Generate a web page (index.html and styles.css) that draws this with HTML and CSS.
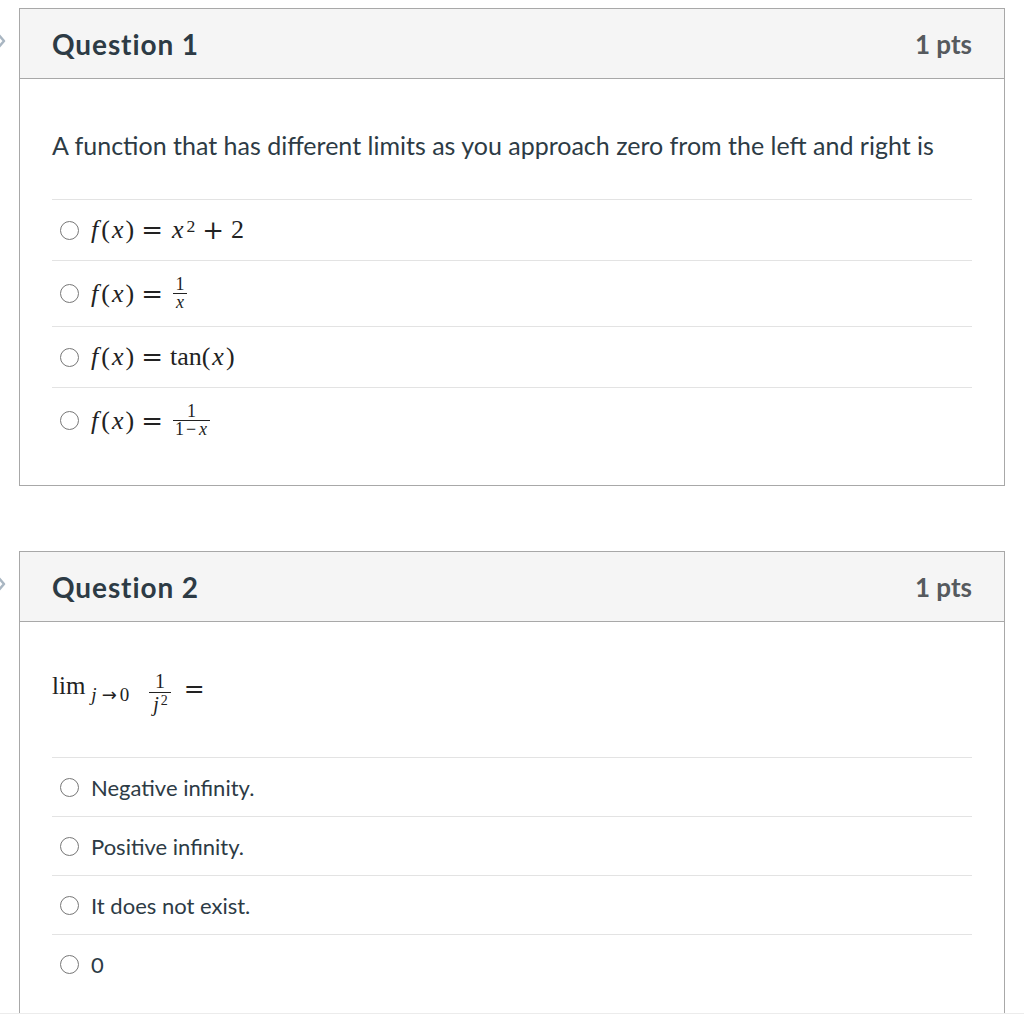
FILE: index.html
```html
<!DOCTYPE html>
<html lang="en">
<head>
<meta charset="utf-8">
<title>Quiz</title>
<link rel="stylesheet" href="styles.css">
</head>
<body>
<div class="page">
  <section class="card">
    <svg class="chevron" width="10" height="18" viewBox="0 0 10 18"><path d="M1 1 L8 9 L1 17" fill="none" stroke="#a9b6c2" stroke-width="2.5" stroke-linecap="round" stroke-linejoin="round"/></svg>
    <header class="card-header">
      <h2 class="q-title">Question 1</h2>
      <span class="q-pts">1 pts</span>
    </header>
    <div class="card-body">
      <p class="q-text">A function that has different limits as you approach zero from the left and right is</p>
      <ul class="answers">
        <li class="answer"><span class="radio"></span><span class="math"><i class="mi-f">f</i>(<i>x</i>)<span class="rel">=</span><i>x</i><sup>2</sup><span class="bin">+</span>2</span></li>
        <li class="answer"><span class="radio"></span><span class="math"><i class="mi-f">f</i>(<i>x</i>)<span class="rel">=</span><span class="frac"><span class="num">1</span><span class="den"><i>x</i></span></span></span></li>
        <li class="answer"><span class="radio"></span><span class="math"><i class="mi-f">f</i>(<i>x</i>)<span class="rel">=</span>tan(<i>x</i>)</span></li>
        <li class="answer"><span class="radio"></span><span class="math"><i class="mi-f">f</i>(<i>x</i>)<span class="rel">=</span><span class="frac"><span class="num">1</span><span class="den">1<span class="minus">−</span><i>x</i></span></span></span></li>
      </ul>
    </div>
  </section>

  <section class="card card-second">
    <svg class="chevron" width="10" height="18" viewBox="0 0 10 18"><path d="M1 1 L8 9 L1 17" fill="none" stroke="#a9b6c2" stroke-width="2.5" stroke-linecap="round" stroke-linejoin="round"/></svg>
    <header class="card-header">
      <h2 class="q-title">Question 2</h2>
      <span class="q-pts">1 pts</span>
    </header>
    <div class="card-body">
      <p class="q-math"><span class="math math-lim"><span class="lim">lim</span><span class="lim-sub"><i>j</i><span class="arrow">→</span>0</span><span class="frac frac-lim"><span class="num">1</span><span class="den"><i>j</i><sup>2</sup></span></span><span class="rel rel-lim">=</span></span></p>
      <ul class="answers">
        <li class="answer text-answer"><span class="radio"></span><span>Negative infinity.</span></li>
        <li class="answer text-answer"><span class="radio"></span><span>Positive infinity.</span></li>
        <li class="answer text-answer"><span class="radio"></span><span>It does not exist.</span></li>
        <li class="answer text-answer"><span class="radio"></span><span>0</span></li>
      </ul>
    </div>
  </section>
</div>
</body>
</html>
```
FILE: styles.css
```css
html, body {
  margin: 0;
  padding: 0;
  background: #ffffff;
}

body {
  font-family: Lato, "Open Sans", sans-serif;
  color: #2d3b45;
}

.page {
  box-sizing: border-box;
  height: 1014px;
  padding-top: 8px;
  overflow: hidden;
  border-bottom: 1px solid #ececec;
}

.card {
  position: relative;
  margin: 0 19px;
  border: 1px solid #a8a8a8;
  background: #ffffff;
}

.card-second {
  margin-top: 65px;
}

.chevron {
  position: absolute;
  left: -24px;
  top: 23px;
}

.card-header {
  height: 70px;
  box-sizing: border-box;
  display: flex;
  align-items: center;
  justify-content: space-between;
  padding: 0 32px;
  background: #f5f5f5;
  border-bottom: 1px solid #a8a8a8;
}

.q-title {
  margin: 0;
  font-size: 28px;
  letter-spacing: 0.9px;
  font-weight: 700;
  color: #2d3b45;
}

.q-pts {
  font-size: 26px;
  font-weight: 700;
  color: #565a5e;
}

.card-body {
  padding: 0 32px 32px;
}

.q-text {
  margin: 50px 0 38px;
  font-size: 25px;
  line-height: 32px;
}

.q-math {
  margin: 49px 0 43px;
  height: 43px;
  display: flex;
  align-items: flex-start;
}

.answers {
  list-style: none;
  margin: 0;
  padding: 0;
}

.answer {
  display: flex;
  align-items: center;
  border-top: 1px solid #e3e3e3;
  padding: 16px 0 16px 8px;
  min-height: 28px;
}

.text-answer {
  padding: 16px 0 15px 8px;
  font-size: 22px;
  line-height: 27px;
  min-height: 27px;
}

.radio {
  box-sizing: border-box;
  width: 19px;
  height: 19px;
  border: 1.5px solid #777777;
  border-radius: 50%;
  margin-right: 12px;
  flex: none;
}

.math {
  font-family: "Liberation Serif", "DejaVu Serif", serif;
  font-size: 26px;
  color: #222222;
  display: inline-flex;
  align-items: center;
  line-height: 28px;
  white-space: nowrap;
}

.math i {
  font-style: italic;
  margin: 0 2px;
}

.math i.mi-f {
  margin: 0 3px 0 0;
}

.math sup {
  font-size: 0.68em;
  line-height: 1;
  position: relative;
  top: -0.2em;
  vertical-align: top;
  margin-left: 1px;
}

.rel {
  font-family: "DejaVu Serif", serif;
  margin: 0 7px;
}

.bin {
  font-family: "DejaVu Serif", serif;
  margin: 0 7px;
}

.frac {
  display: inline-flex;
  flex-direction: column;
  align-items: stretch;
  text-align: center;
  font-size: 18px;
  line-height: 15px;
  margin-left: 3px;
}

.frac .num {
  padding: 0 2px 1px;
  border-bottom: 1px solid #222222;
}

.frac .den {
  padding: 1px 2px 0;
}

.frac .den i {
  margin: 0 1px;
}

.minus {
  margin: 0 2px;
}

.frac .den sup {
  font-size: 0.7em;
  top: -0.1em;
}

.math-lim {
  align-items: baseline;
  font-size: 25px;
}

.lim {
  position: relative;
  top: 1px;
}

.lim-sub {
  font-size: 19px;
  position: relative;
  top: 8px;
  margin-left: 4px;
}

.lim-sub .arrow {
  font-family: "DejaVu Sans", sans-serif;
  font-size: 18px;
  margin: 0 3px;
}

.frac-lim {
  margin-left: 20px;
  font-size: 20px;
  line-height: 19px;
  position: relative;
  top: -5px;
}

.frac-lim .num {
  padding: 0 3px 1px;
}

.frac-lim .den {
  padding: 2px 3px 0;
}

.rel-lim {
  margin-left: 13px;
  position: relative;
  top: 4px;
}
```
